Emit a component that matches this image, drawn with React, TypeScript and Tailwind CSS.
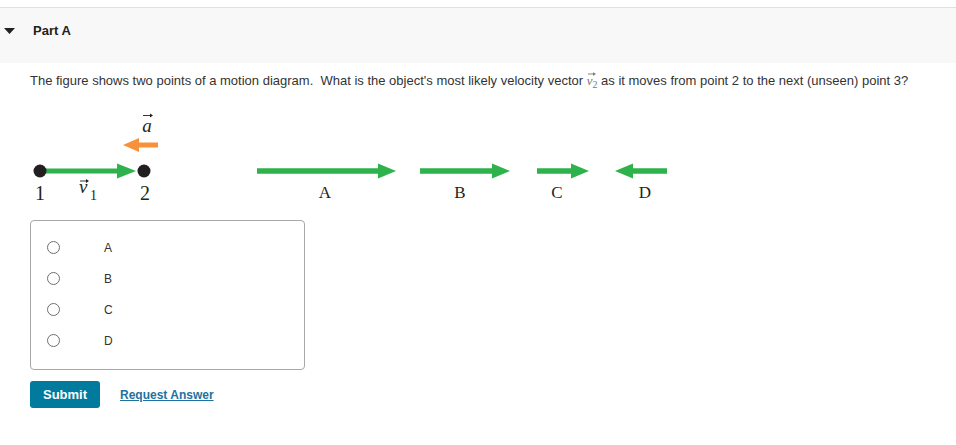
import React from "react";

const GREEN = "#2eb24b";
const ORANGE = "#f7923a";
const INK = "#231f20";

// horizontal arrow: shaft + triangular head, dir 1 = right, -1 = left
function Arrow({
  from,
  to,
  y,
  color,
  head = 18,
  half = 7.5,
  width = 5.5,
}: {
  from: number;
  to: number;
  y: number;
  color: string;
  head?: number;
  half?: number;
  width?: number;
}) {
  const dir = to > from ? 1 : -1;
  const base = to - dir * head;
  return (
    <g fill={color}>
      <rect
        x={Math.min(from, base + dir)}
        y={y - width / 2}
        width={Math.abs(base + dir - from)}
        height={width}
      />
      <polygon points={`${base},${y - half} ${to},${y} ${base},${y + half}`} />
    </g>
  );
}

function VecMark({ x1, x2, y, color = INK }: { x1: number; x2: number; y: number; color?: string }) {
  return (
    <g stroke={color} fill={color}>
      <line x1={x1} y1={y} x2={x2 - 2} y2={y} strokeWidth={0.9} />
      <polygon points={`${x2 - 3},${y - 2} ${x2},${y} ${x2 - 3},${y + 2}`} stroke="none" />
    </g>
  );
}

function Figure() {
  const serif = { fontFamily: '"Liberation Serif", "Times New Roman", serif' };
  return (
    <svg width={650} height={110} viewBox="30 100 650 110" className="block">
      {/* points 1 and 2 */}
      <Arrow from={40} to={136} y={171} color={GREEN} head={19} half={7.5} width={5} />
      <circle cx={40} cy={171} r={6.5} fill={INK} />
      <circle cx={144} cy={171} r={6.5} fill={INK} />
      <Arrow from={158} to={123} y={145} color={ORANGE} head={16} half={7} width={5} />

      <text x={147} y={132} fontSize={19} fontStyle="italic" textAnchor="middle" fill={INK} style={serif}>
        a
      </text>
      <VecMark x1={143} x2={153} y={115.5} />

      <text x={40} y={200} fontSize={20} textAnchor="middle" fill={INK} style={serif}>
        1
      </text>
      <text x={79} y={193} fontSize={19} fontStyle="italic" fill={INK} style={serif}>
        v
      </text>
      <text x={90} y={200} fontSize={14} fill={INK} style={serif}>
        1
      </text>
      <VecMark x1={80} x2={89} y={181} />
      <text x={145} y={200} fontSize={20} textAnchor="middle" fill={INK} style={serif}>
        2
      </text>

      {/* answer choices */}
      <Arrow from={257} to={396} y={171} color={GREEN} />
      <Arrow from={420} to={510} y={171} color={GREEN} />
      <Arrow from={537} to={589} y={171} color={GREEN} />
      <Arrow from={667} to={615} y={171} color={GREEN} />
      {[
        ["A", 325],
        ["B", 460],
        ["C", 557],
        ["D", 645],
      ].map(([l, x]) => (
        <text key={l} x={x} y={198} fontSize={17} textAnchor="middle" fill={INK} style={serif}>
          {l}
        </text>
      ))}
    </svg>
  );
}

export default function App() {
  const options = ["A", "B", "C", "D"];

  return (
    <div className="w-[956px] h-[445px] bg-white pt-[7px] font-['Liberation_Sans',Arial,sans-serif] text-[#333]">
      {/* Part header */}
      <div className="h-[56px] border-t border-[#e0e0e0] bg-[#f8f8f8] flex items-start pt-[15px]">
        <svg width="11" height="6" viewBox="0 0 11 6" className="ml-[4px] mt-[5px]">
          <polygon points="0,0 11,0 5.5,6" fill="#222" />
        </svg>
        <span className="ml-[18px] text-[13px] leading-4 font-bold text-[#222]">Part A</span>
      </div>

      <div className="px-[30px]">
        <p className="mt-[10px] h-4 text-[13px] leading-4 whitespace-nowrap">
          The figure shows two points of a motion diagram.&nbsp; What is the object's most likely velocity vector{" "}
          <span className="relative font-['Liberation_Serif',serif] italic text-[13px] leading-4 text-[#777]">
            v<span className="not-italic text-[10px] relative top-[3px]">2</span>
            <svg width="8" height="4" viewBox="0 0 8 4" className="absolute left-[1px] top-[-1px]">
              <line x1="0" y1="2" x2="6" y2="2" stroke="#777" strokeWidth="0.9" />
              <polygon points="5,0.3 8,2 5,3.7" fill="#777" />
            </svg>
          </span>{" "}
          as it moves from point 2 to the next (unseen) point 3?
        </p>

        <div className="mt-[11px]">
          <Figure />
        </div>

        <div className="mt-[10px] w-[275px] h-[150px] border border-[#a8a8a8] rounded-[4px] pt-[11px]">
          {options.map((o) => (
            <label key={o} className="h-[31px] flex items-center">
              <span className="ml-[16px] w-[13px] h-[13px] rounded-full border border-[#6f6f6f] bg-white" />
              <span className="ml-[44px] text-[12px] text-[#333]">{o}</span>
            </label>
          ))}
        </div>

        <div className="mt-[11px] flex items-center">
          <button className="w-[70px] h-[27px] rounded-[3px] bg-[#007b9e] text-white text-[13px] font-bold">
            Submit
          </button>
          <a href="#" className="ml-[20px] text-[12px] font-bold text-[#1c72a0] underline">
            Request Answer
          </a>
        </div>
      </div>
    </div>
  );
}
